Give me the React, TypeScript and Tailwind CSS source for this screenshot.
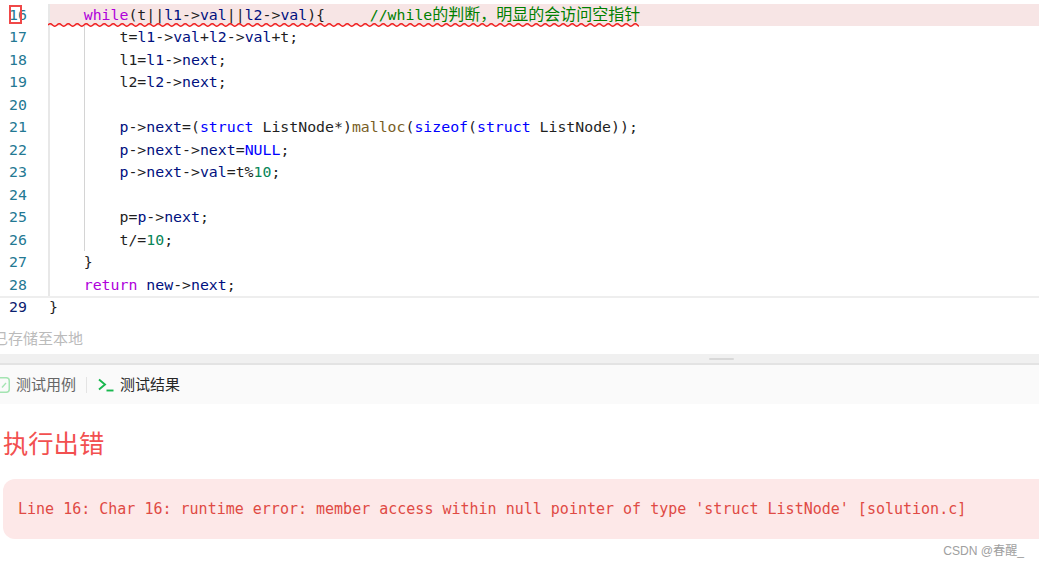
const K = ({ c }: { c: string }) => <span className="text-[#af00db]">{c}</span>;
const V = ({ c }: { c: string }) => <span className="text-[#001080]">{c}</span>;
const B = ({ c }: { c: string }) => <span className="text-[#0000ff]">{c}</span>;
const N = ({ c }: { c: string }) => <span className="text-[#098658]">{c}</span>;
const F = ({ c }: { c: string }) => <span className="text-[#795e26]">{c}</span>;

const rows: { n: number; guide?: boolean; code: React.ReactNode }[] = [
  { n: 17, guide: true, code: <>{"        t="}<V c="l1" />{"->"}<V c="val" />{"+"}<V c="l2" />{"->"}<V c="val" />{"+t;"}</> },
  { n: 18, guide: true, code: <>{"        l1="}<V c="l1" />{"->"}<V c="next" />{";"}</> },
  { n: 19, guide: true, code: <>{"        l2="}<V c="l2" />{"->"}<V c="next" />{";"}</> },
  { n: 20, guide: true, code: "" },
  { n: 21, guide: true, code: <>{"        "}<V c="p" />{"->"}<V c="next" />{"=("}<B c="struct" />{" ListNode*)"}<F c="malloc" />{"("}<B c="sizeof" />{"("}<B c="struct" />{" ListNode));"}</> },
  { n: 22, guide: true, code: <>{"        "}<V c="p" />{"->"}<V c="next" />{"->"}<V c="next" />{"="}<B c="NULL" />{";"}</> },
  { n: 23, guide: true, code: <>{"        "}<V c="p" />{"->"}<V c="next" />{"->"}<V c="val" />{"=t%"}<N c="10" />{";"}</> },
  { n: 24, guide: true, code: "" },
  { n: 25, guide: true, code: <>{"        p="}<V c="p" />{"->"}<V c="next" />{";"}</> },
  { n: 26, guide: true, code: <>{"        t/="}<N c="10" />{";"}</> },
  { n: 27, code: "    }" },
];

function Squiggle() {
  const segs = Array.from({ length: 66 }, (_, i) => `Q${i * 9 + 2.25} 0.5 ${i * 9 + 4.5} 3 T${i * 9 + 9} 3`).join(" ");
  return (
    <svg className="absolute left-0 bottom-[-2px]" width="591" height="6" viewBox="0 0 591 6" fill="none">
      <path d={`M0 3 ${segs}`} stroke="#f01c1c" strokeWidth="1.3" />
    </svg>
  );
}

export default function App() {
  const mono = "font-['DejaVu_Sans_Mono','Liberation_Mono',monospace]";
  const rule = "shadow-[inset_2px_0_0_#e8e8e8]";
  return (
    <div className="w-[1039px] h-[567px] overflow-hidden bg-white font-['Noto_Sans_CJK_SC','Noto_Sans',sans-serif]">
      <div className={`relative h-[318px] pt-[3.5px] overflow-hidden text-[14.85px] leading-[22.5px] whitespace-pre text-[#1f1f1f] ${mono}`}>
        <div className="absolute left-[9px] top-[5px] w-[13px] h-[19px] border-[2px] border-[#f04848]" />
        <div className="flex h-[22.5px]">
          <div className="w-[48px] pl-[9px] text-[#237893]">16</div>
          <div className={`relative flex-1 bg-[#f7e5e5] ${rule}`}>
            <span>{"    "}<K c="while" />{"(t||"}<V c="l1" />{"->"}<V c="val" />{"||"}<V c="l2" />{"->"}<V c="val" />{"){     "}<span className="text-[#008000]">//while<span className="text-[16px] font-['Noto_Sans_CJK_SC',sans-serif] leading-none">的判断，明显的会访问空指针</span></span></span>
            <Squiggle />
          </div>
        </div>
        {rows.map((r) => (
          <div key={r.n} className="flex h-[22.5px]">
            <div className="w-[48px] pl-[9px] text-[#237893]">{r.n}</div>
            <div className={`relative flex-1 ${rule}`}>
              {r.guide && <div className="absolute left-[36px] top-0 h-full w-px bg-[#d4d4d4]" />}
              {r.code}
            </div>
          </div>
        ))}
        <div className="flex h-[24px] border-b-2 border-[#eeeeee]">
          <div className="w-[48px] pl-[9px] text-[#237893]">28</div>
          <div className={`flex-1 ${rule}`}>{"    "}<K c="return" />{" "}<V c="new" />{"->"}<V c="next" />{";"}</div>
        </div>
        <div className="flex h-[22px] -mt-[1.5px]">
          <div className="w-[48px] pl-[9px] text-[#0b216f]">29</div>
          <div className="pl-px">{"}"}</div>
        </div>
      </div>

      <div className="h-[36px] pt-[5px] -ml-[7px] flex items-center text-[15px] text-[#bbbbbb]">已存储至本地</div>

      <div className="flex h-[11px] items-center justify-center border-b-2 border-[#e3e3e3] bg-[#f0f0f0] pl-[403px]">
        <div className="h-[2px] w-[25px] rounded bg-[#d8d8d8]" />
      </div>

      <div className="flex h-[39px] items-center bg-[#fafafa] text-[15px]">
        <svg className="-ml-[5px] shrink-0" width="15" height="16" viewBox="0 0 15 16" fill="none">
          <rect x="0.75" y="0.75" width="13.5" height="14.5" rx="3" stroke="#a4e4b2" strokeWidth="1.5" />
          <path d="M7 10.5 L11 6" stroke="#a4e4b2" strokeWidth="1.3" />
        </svg>
        <span className="ml-[6px] text-[#666666]">测试用例</span>
        <div className="ml-[10px] h-[16px] w-px bg-[#e4e4e4]" />
        <svg className="ml-[11px] shrink-0" width="16" height="14" viewBox="0 0 16 14" fill="none">
          <path d="M1 1.5 L7 6.5 L1 11.5" stroke="#18b84e" strokeWidth="1.9" />
          <path d="M8.5 12.5 H15.5" stroke="#18b84e" strokeWidth="1.9" />
        </svg>
        <span className="ml-[6px] text-[#262626]">测试结果</span>
      </div>

      <div className="pl-[3px]">
        <div className="mt-[20px] h-[38px] flex items-center text-[25.3px] text-[#f25050]">执行出错</div>
        <div className={`mt-[17px] flex h-[60px] items-center rounded-l-xl bg-[#fde8e8] pl-[15px] text-[15px] whitespace-pre text-[#e04a44] ${mono}`}>
          Line 16: Char 16: runtime error: member access within null pointer of type 'struct ListNode' [solution.c]
        </div>
        <div className="mt-[3px] pr-[15px] text-right font-['Liberation_Sans','Noto_Sans_CJK_SC',sans-serif] text-[12.1px] leading-[18px] text-[#a0a0a0]">CSDN @春醒_</div>
      </div>
    </div>
  );
}
